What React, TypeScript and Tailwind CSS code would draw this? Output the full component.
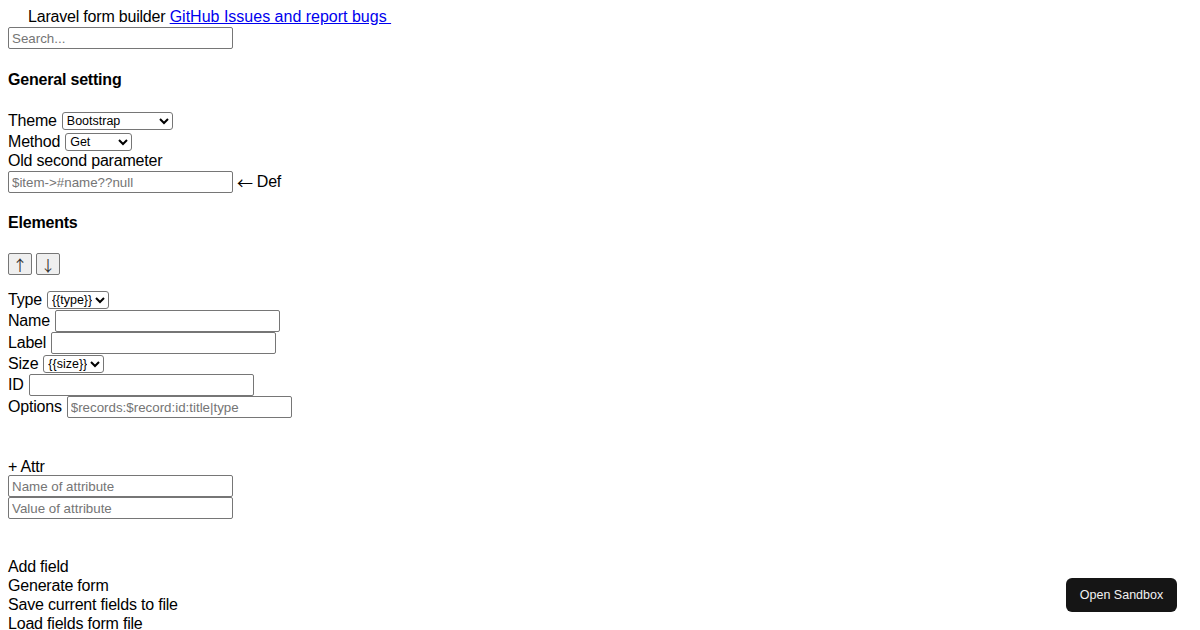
import { useState } from "react"

interface IField {
  label: string;
  kind: "select" | "input";
  value?: string;
  placeholder?: string;
  width?: string;
  height: string;
}

const fields: IField[] = [
  { label: "Type", kind: "select", value: "{{type}}", width: "w-[62px]", height: "h-[21px]" },
  { label: "Name", kind: "input", height: "h-[22px]" },
  { label: "Label", kind: "input", height: "h-[22px]" },
  { label: "Size", kind: "select", value: "{{size}}", width: "w-[61px]", height: "h-[20px]" },
  { label: "ID", kind: "input", height: "h-[22px]" },
  { label: "Options", kind: "input", placeholder: "$records:$record:id:title|type", height: "h-[22px]" },
]

const inputCls =
  "w-[225px] h-[22px] border border-[#767676] rounded-[2px] px-[3px] text-[13.33px] tracking-normal align-middle placeholder:text-[#757575] bg-white"
const selectCls =
  "h-[18px] border border-[#767676] rounded-[3px] text-[12.5px] tracking-normal leading-none align-middle bg-white appearance-auto"
const btnCls =
  "w-6 h-[22px] border border-[#767676] rounded-[2px] bg-[#efefef] text-[#333] text-[15px] leading-none font-['Noto_Sans_CJK_SC',sans-serif]"

function Row({ f }: { f: IField }) {
  return (
    <div className={"flex items-center gap-[5px] " + f.height}>
      <span>{f.label}</span>
      {f.kind === "select" ? (
        <select className={selectCls + " " + f.width} defaultValue={f.value}>
          <option>{f.value}</option>
        </select>
      ) : (
        <input className={inputCls} placeholder={f.placeholder} />
      )}
    </div>
  )
}

export default function App() {
  const [search, setSearch] = useState("")
  return (
    <div className="p-2 font-['Liberation_Sans',Arial,sans-serif] text-[16px] tracking-[-0.2px] leading-[normal] text-black bg-white min-h-[630px]">
      <div className="pl-5 h-[19px]">
        Laravel form builder{" "}
        <a href="#" className="text-[#0000ee] underline tracking-normal">GitHub Issues and report bugs&nbsp;</a>
      </div>
      <input
        className={inputCls + " block"}
        placeholder="Search..."
        value={search}
        onChange={(e) => setSearch(e.target.value)}
      />

      <h4 className="font-bold mt-[22px] mb-[21px]">General setting</h4>
      <div className="flex items-center h-[21px] gap-[5px] mt-px">
        <span>Theme</span>
        <select className={selectCls + " w-[111px]"} defaultValue="Bootstrap">
          <option>Bootstrap</option>
        </select>
      </div>
      <div className="flex items-center h-[21px] gap-[5px]">
        <span>Method</span>
        <select className={selectCls + " w-[67px]"} defaultValue="Get">
          <option>Get</option>
        </select>
      </div>
      <div className="h-[19px]">Old second parameter</div>
      <div className="flex items-center gap-[4px] h-[22px]">
        <input className={inputCls} placeholder="$item->#name??null" />
        <span className="flex items-center gap-[4px] h-[18px]">
          <span className="font-['Noto_Sans_CJK_SC',sans-serif] text-[16px] leading-none">←</span>
          <span>Def</span>
        </span>
      </div>

      <h4 className="font-bold mt-[21px] mb-[21px]">Elements</h4>
      <div className="flex gap-1 mb-[14px]">
        <button className={btnCls}>↑</button>
        <button className={btnCls}>↓</button>
      </div>

      <div>
        {fields.map((f) => (
          <Row key={f.label} f={f} />
        ))}
      </div>

      <div className="mt-[39px] h-[18px] leading-[18px] pt-px box-border">+ Attr</div>
      <input className={inputCls + " block"} placeholder="Name of attribute" />
      <input className={inputCls + " block"} placeholder="Value of attribute" />

      <div className="mt-[39px] flex flex-col">
        <span className="h-[19px]">Add field</span>
        <span className="h-[19px]">Generate form</span>
        <span className="h-[19px]">Save current fields to file</span>
        <span className="h-[19px]">Load fields form file</span>
      </div>

      <button className="fixed right-[23px] bottom-[18px] w-[111px] h-[34px] rounded-md bg-[#151515] text-[#f2f2f2] text-[12.5px] tracking-normal font-['Liberation_Sans',Arial,sans-serif]">
        Open Sandbox
      </button>
    </div>
  )
}
